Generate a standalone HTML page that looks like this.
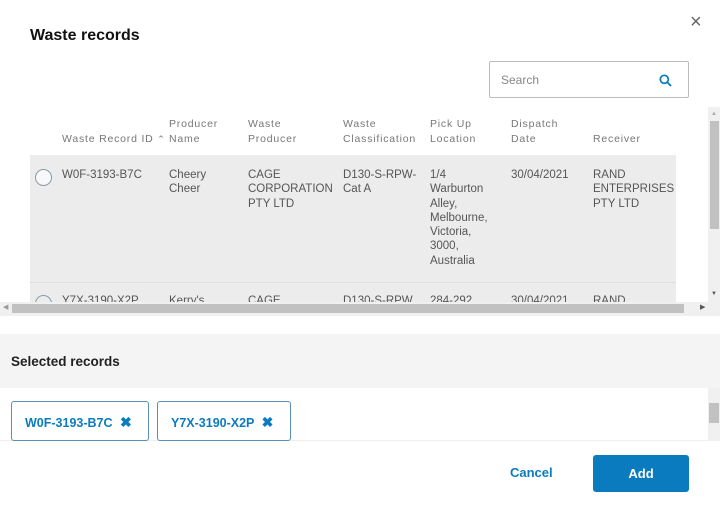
<!DOCTYPE html>
<html><head><style>
*{margin:0;padding:0;box-sizing:border-box}
body{width:720px;height:508px;background:#fff;font-family:"Liberation Sans",sans-serif;position:relative;overflow:hidden;color:#444}
.a{position:absolute}
.h{font-size:10.5px;color:#777;letter-spacing:0.8px;line-height:15px}
.c{font-size:11.5px;color:#555;line-height:14.3px}
</style></head><body>
<div class="a" style="left:30px;top:27px;font-size:16px;font-weight:bold;color:#111">Waste records</div>
<div class="a" style="left:690px;top:12px;font-size:20px;color:#666;line-height:20px">×</div>
<div class="a" style="left:489px;top:61px;width:200px;height:37px;border:1px solid #bbb;border-radius:2px"></div>
<div class="a" style="left:501px;top:73px;font-size:12px;color:#888">Search</div>
<svg class="a" style="left:659px;top:74px" width="13" height="13" viewBox="0 0 13 13"><circle cx="5.3" cy="5.3" r="4" fill="none" stroke="#0a7bbf" stroke-width="1.7"/><line x1="8.3" y1="8.3" x2="12" y2="12" stroke="#0a7bbf" stroke-width="1.8"/></svg>

<div class="a" style="left:0;top:107px;width:708px;height:195px;overflow:hidden">
<div class="a h" style="left:62px;top:25px">Waste Record ID <span style="font-size:9px">⌃</span></div>
<div class="a h" style="left:169px;top:10px">Producer<br>Name</div>
<div class="a h" style="left:248px;top:10px">Waste<br>Producer</div>
<div class="a h" style="left:343px;top:10px">Waste<br>Classification</div>
<div class="a h" style="left:430px;top:10px">Pick Up<br>Location</div>
<div class="a h" style="left:511px;top:10px">Dispatch<br>Date</div>
<div class="a h" style="left:593px;top:25px">Receiver</div>
<div class="a" style="left:30px;top:48px;width:646px;height:160px;background:#edecec"></div>
<div class="a" style="left:30px;top:175px;width:646px;height:1px;background:#ddd"></div>
<div class="a" style="left:35px;top:62px;width:17px;height:17px;border:1px solid #8a9aaa;border-radius:50%;background:#f8f8f8"></div>
<div class="a c" style="left:62px;top:61px">W0F-3193-B7C</div>
<div class="a c" style="left:169px;top:61px">Cheery<br>Cheer</div>
<div class="a c" style="left:248px;top:61px">CAGE<br>CORPORATION<br>PTY LTD</div>
<div class="a c" style="left:343px;top:61px">D130-S-RPW-<br>Cat A</div>
<div class="a c" style="left:430px;top:61px">1/4<br>Warburton<br>Alley,<br>Melbourne,<br>Victoria,<br>3000,<br>Australia</div>
<div class="a c" style="left:511px;top:61px">30/04/2021</div>
<div class="a c" style="left:593px;top:61px">RAND<br>ENTERPRISES<br>PTY LTD</div>
<div class="a" style="left:35px;top:188px;width:17px;height:17px;border:1px solid #8a9aaa;border-radius:50%"></div>
<div class="a c" style="left:62px;top:187px">Y7X-3190-X2P</div>
<div class="a c" style="left:169px;top:187px">Kerry's</div>
<div class="a c" style="left:248px;top:187px">CAGE</div>
<div class="a c" style="left:343px;top:187px">D130-S-RPW</div>
<div class="a c" style="left:430px;top:187px">284-292</div>
<div class="a c" style="left:511px;top:187px">30/04/2021</div>
<div class="a c" style="left:593px;top:187px">RAND</div>
</div>
<div class="a" style="left:708px;top:107px;width:12px;height:195px;background:#f0f0f0"></div>
<div class="a" style="left:710px;top:121px;width:9px;height:108px;background:#c1c1c1"></div>
<div class="a" style="left:0;top:302px;width:720px;height:14px;background:#f0f0f0"></div>
<div class="a" style="left:12px;top:304px;width:672px;height:9px;background:#c1c1c1"></div>
<div class="a" style="left:3px;top:303px;font-size:7px;color:#999">◀</div>
<div class="a" style="left:700px;top:303px;font-size:7px;color:#555">▶</div>
<div class="a" style="left:711px;top:111px;font-size:6px;color:#aaa">▲</div>
<div class="a" style="left:711px;top:291px;font-size:6px;color:#555">▼</div>

<div class="a" style="left:0;top:334px;width:720px;height:54px;background:#f4f4f4"></div>
<div class="a" style="left:11px;top:354px;font-size:13.5px;font-weight:bold;color:#222">Selected records</div>
<div class="a" style="left:0;top:440px;width:708px;height:1px;background:#eee"></div>
<div class="a" style="left:708px;top:388px;width:12px;height:53px;background:#f0f0f0"></div>
<div class="a" style="left:709px;top:403px;width:10px;height:20px;background:#c1c1c1"></div>
<div class="a" style="left:11px;top:401px;width:138px;height:40px;border:1px solid #5a8fb5;border-radius:3px;font-size:12.5px;font-weight:bold;color:#0a7bbf;padding:12px 0 0 13px">W0F-3193-B7C <span style="margin-left:4px;font-size:14px">✖</span></div>
<div class="a" style="left:157px;top:401px;width:134px;height:40px;border:1px solid #5a8fb5;border-radius:3px;font-size:12.5px;font-weight:bold;color:#0a7bbf;padding:12px 0 0 13px">Y7X-3190-X2P <span style="margin-left:4px;font-size:14px">✖</span></div>
<div class="a" style="left:510px;top:465px;font-size:13px;font-weight:bold;color:#0a7bbf">Cancel</div>
<div class="a" style="left:593px;top:455px;width:96px;height:37px;background:#0a7bbf;border-radius:3px;color:#fff;font-size:13px;font-weight:bold;text-align:center;line-height:37px">Add</div>
</body></html>
